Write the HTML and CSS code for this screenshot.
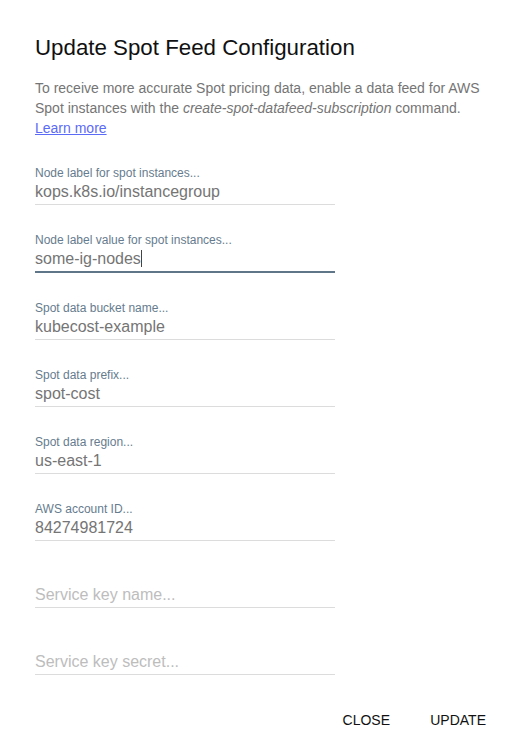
FILE: index.html
```html
<!DOCTYPE html>
<html>
<head>
<meta charset="utf-8">
<link rel="stylesheet" href="styles.css">
</head>
<body>
<div class="dialog">
  <h2 class="title">Update Spot Feed Configuration</h2>
  <p class="desc">To receive more accurate Spot pricing data, enable a data feed for AWS Spot instances with the <i>create-spot-datafeed-subscription</i> command. <a href="#" class="link">Learn more</a></p>
  <div class="fields">
    <div class="field">
      <div class="label">Node label for spot instances...</div>
      <div class="input">kops.k8s.io/instancegroup</div>
    </div>
    <div class="field focused">
      <div class="label">Node label value for spot instances...</div>
      <div class="input">some-ig-nodes<span class="caret"></span></div>
    </div>
    <div class="field">
      <div class="label">Spot data bucket name...</div>
      <div class="input">kubecost-example</div>
    </div>
    <div class="field">
      <div class="label">Spot data prefix...</div>
      <div class="input">spot-cost</div>
    </div>
    <div class="field">
      <div class="label">Spot data region...</div>
      <div class="input">us-east-1</div>
    </div>
    <div class="field">
      <div class="label">AWS account ID...</div>
      <div class="input">84274981724</div>
    </div>
    <div class="field empty">
      <div class="label"></div>
      <div class="input placeholder">Service key name...</div>
    </div>
    <div class="field empty">
      <div class="label"></div>
      <div class="input placeholder">Service key secret...</div>
    </div>
  </div>
  <div class="actions">
    <button class="btn">CLOSE</button>
    <button class="btn">UPDATE</button>
  </div>
</div>
</body>
</html>
```
FILE: styles.css
```css
html, body {
  margin: 0;
  padding: 0;
  background: #fff;
}
body {
  font-family: "Liberation Sans", Arial, sans-serif;
}
.dialog {
  padding: 30px 29px 0 35px;
}
.title {
  margin: 0;
  font-size: 22.3px;
  font-weight: 400;
  line-height: 36px;
  color: #111;
}
.desc {
  margin: 12px 0 0 0;
  font-size: 14px;
  line-height: 20px;
  color: #757575;
}
.link {
  color: #5c6bf6;
  text-decoration: underline;
}
.fields {
  margin-top: 23px;
  display: flex;
  flex-direction: column;
  gap: 23px;
}
.field {
  width: 300px;
  height: 44px;
  box-sizing: border-box;
  border-bottom: 1px solid #dcdcdc;
  display: flex;
  flex-direction: column;
  justify-content: flex-end;
}
.field.focused {
  border-bottom: 2px solid #5f7688;
  height: 45px;
}
.label {
  font-size: 12px;
  line-height: 14px;
  color: #667c8e;
}
.input {
  font-size: 16px;
  line-height: 24px;
  color: #757575;
}
.placeholder {
  color: #bdbdbd;
}
.caret {
  display: inline-block;
  width: 1px;
  height: 17px;
  background: #444;
  vertical-align: -3px;
}
.actions {
  margin-top: 27px;
  margin-right: -7px;
  display: flex;
  justify-content: flex-end;
  gap: 24px;
}
.btn {
  background: none;
  border: 0;
  font-family: "Liberation Sans", Arial, sans-serif;
  font-size: 14px;
  color: #111;
  padding: 6px 8px;
  min-width: 64px;
  line-height: 24px;
}
```
